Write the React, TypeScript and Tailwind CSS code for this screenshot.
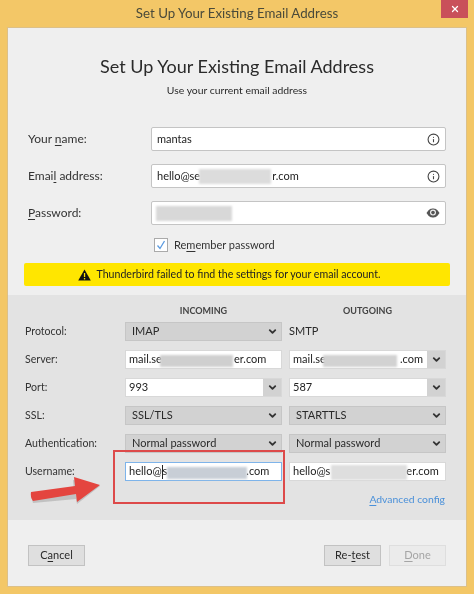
import React from "react";
import { ChevronDown, Info, X } from "lucide-react";

const Chevron = () => <ChevronDown size={11} strokeWidth={4} className="text-[#333]" />;

const U = ({ children }: { children: React.ReactNode }) => <span className="underline underline-offset-2 decoration-1">{children}</span>;

const Smudge = ({ className }: { className: string }) => <div className={`absolute blur-[1px] ${className}`} />;

function TopRow({ label, children, icon, mt }: { label: React.ReactNode; children: React.ReactNode; icon: React.ReactNode; mt: string }) {
  return (
    <div className={`flex items-center ${mt}`}>
      <div className="w-[143px] pl-[20px] text-[12px] text-[#333]">{label}</div>
      <div className="relative flex h-[24px] w-[295px] items-center justify-between rounded-[2px] border border-[#c4c4c4] bg-white pl-[5px] pr-[5px] text-[11px] text-[#222]">
        {children}
        {icon}
      </div>
    </div>
  );
}

function Select({ children, w = "w-[157px]" }: { children: React.ReactNode; w?: string }) {
  return (
    <div className={`flex h-[19px] ${w} items-center justify-between border border-[#c6c6c6] bg-[#d2d2d2] pl-[6px] pr-[3px] text-[11px] text-[#2a2a2a]`}>
      <span>{children}</span>
      <Chevron />
    </div>
  );
}

function Input({ children, w = "w-[157px]", drop, focus }: { children: React.ReactNode; w?: string; drop?: boolean; focus?: boolean }) {
  return (
    <div className={`relative flex h-[19px] ${w} items-stretch border ${focus ? "border-[#7eb4ea]" : "border-[#d8d8d8]"} bg-white text-[11px] text-[#222]`}>
      <div className="flex min-w-0 flex-1 items-center overflow-hidden whitespace-nowrap pl-[3px]">{children}</div>
      {drop && (
        <div className="flex w-[18px] shrink-0 items-center justify-center bg-[#d2d2d2]">
          <Chevron />
        </div>
      )}
    </div>
  );
}

function Row({ label, a, b, mt = "mt-[9px]" }: { label: string; a: React.ReactNode; b: React.ReactNode; mt?: string }) {
  return (
    <div className={`flex items-center ${mt}`}>
      <div className="w-[117px] pl-[17px] text-[10.6px] text-[#333]">{label}</div>
      <div className="flex items-center gap-[7px]">
        {a}
        {b}
      </div>
    </div>
  );
}

function Btn({ children, disabled }: { children: React.ReactNode; disabled?: boolean }) {
  return (
    <div className={`flex h-[21px] w-[57px] items-center justify-center border text-[11px] ${disabled ? "border-[#dedede] bg-[#ebebeb] text-[#a5a5a5]" : "border-[#c2c2c2] bg-[#dfdfdf] text-[#2a2a2a]"}`}>
      {children}
    </div>
  );
}

export default function App() {
  return (
    <div className="relative flex h-[594px] w-[474px] flex-col overflow-hidden bg-[#f3c767] font-['Lato','Noto_Sans',sans-serif] blur-[0.3px]">
      <div className="relative flex h-[27px] shrink-0 items-center justify-center text-[13.3px] text-[#4a4a3a]">
        Set Up Your Existing Email Address
        <div className="absolute right-[6px] top-0 flex h-[18px] w-[27px] items-center justify-center bg-[#c9505a] text-white">
          <X size={10} strokeWidth={3} />
        </div>
      </div>
      <div className="mx-[7px] flex h-[560px] flex-col border border-[#dcc088] bg-[#efefef]">
        <div className="flex h-[267px] shrink-0 flex-col">
          <div className="mt-[24px] text-center text-[18px] leading-[28px] text-[#2a2a2a]">Set Up Your Existing Email Address</div>
          <div className="mt-[2px] text-center text-[10.4px] leading-[16px] text-[#2a2a2a]">Use your current email address</div>
          <TopRow mt="mt-[29px]" label={<>Your <U>n</U>ame:</>} icon={<Info size={13} strokeWidth={2} className="text-[#444]" />}>
            <span>mantas</span>
          </TopRow>
          <TopRow
            mt="mt-[13px]"
            label={<>Emai<U>l</U> address:</>}
            icon={<Info size={13} strokeWidth={2} className="text-[#444]" />}
          >
            <span>hello@se<span className="inline-block w-[72px]" />r.com</span>
            <Smudge className="left-[47px] top-[4px] h-[15px] w-[72px] bg-[#dcdcdc]" />
          </TopRow>
          <TopRow
            mt="mt-[13px]"
            label={<><U>P</U>assword:</>}
            icon={
              <svg width="14" height="10" viewBox="0 0 14 10">
                <path d="M0.5 5C3 1 5 0.5 7 0.5S11 1 13.5 5C11 9 9 9.5 7 9.5S3 9 0.5 5Z" fill="#555" />
                <circle cx="7" cy="4.6" r="3" fill="#eee" />
                <circle cx="7" cy="4.6" r="1.8" fill="#555" />
              </svg>
            }
          >
            <span />
            <Smudge className="left-[4px] top-[4px] h-[15px] w-[76px] bg-[#d8d8d8]" />
          </TopRow>
          <div className="ml-[146px] mt-[13px] flex h-[14px] items-center gap-[6px] text-[11px] text-[#333]">
            <div className="flex h-[14px] w-[14px] items-center justify-center border border-[#aaa] bg-white">
              <svg width="10" height="10" viewBox="0 0 10 10" fill="none">
                <path d="M1.5 5.5L4 8.5L8.5 1" stroke="#5a9ae0" strokeWidth="1.3" />
              </svg>
            </div>
            <span>Re<U>m</U>ember password</span>
          </div>
          <div className="mx-[16px] mt-[11px] flex h-[23px] items-center justify-center gap-[6px] rounded-[2px] bg-[#ffe600] pr-[16px] text-[10.6px] text-[#222]">
            <svg width="13" height="12" viewBox="0 0 13 12">
              <path d="M6.5 0.5L12.8 11.5H0.2Z" fill="#111" />
              <rect x="5.9" y="4" width="1.3" height="4" fill="#ffe600" />
              <rect x="5.9" y="9" width="1.3" height="1.4" fill="#ffe600" />
            </svg>
            Thunderbird failed to find the settings for your email account.
          </div>
        </div>
        <div className="flex h-[225px] shrink-0 flex-col bg-[#e3e3e3]">
          <div className="mt-[9px] flex text-[9px] font-bold leading-[14px] text-[#444]">
            <div className="w-[117px]" />
            <div className="w-[157px] text-center">INCOMING</div>
            <div className="ml-[7px] w-[157px] text-center">OUTGOING</div>
          </div>
          <Row
            mt="mt-[4px]"
            label="Protocol:"
            a={<Select>IMAP</Select>}
            b={<div className="w-[157px] text-[11px] text-[#2a2a2a]">SMTP</div>}
          />
          <Row
            label="Server:"
            a={
              <Input>
                mail.se<span className="inline-block w-[72px]" />er.com
                <Smudge className="left-[34px] top-[4px] h-[12px] w-[73px] bg-[#cfcfcf]" />
              </Input>
            }
            b={
              <Input drop>
                mail.se<span className="inline-block w-[74px] shrink-0" />.com
                <Smudge className="left-[33px] top-[4px] h-[12px] w-[74px] bg-[#d2d2d2]" />
              </Input>
            }
          />
          <Row label="Port:" a={<Input drop>993</Input>} b={<Input drop>587</Input>} />
          <Row label="SSL:" a={<Select>SSL/TLS</Select>} b={<Select>STARTTLS</Select>} />
          <Row label="Authentication:" a={<Select>Normal password</Select>} b={<Select>Normal password</Select>} />
          <Row
            label="Username:"
            a={
              <Input focus>
                hello@
                <span className="h-[14px] w-px bg-[#222]" />
                s<span className="inline-block w-[79px]" />.com
                <Smudge className="left-[41px] top-[4px] h-[12px] w-[80px] bg-[#c8ced6]" />
              </Input>
            }
            b={
              <Input>
                hello@s<span className="inline-block w-[76px]" />er.com
                <Smudge className="left-[41px] top-[2px] h-[15px] w-[76px] bg-[#dedede]" />
              </Input>
            }
          />
          <div className="mr-[21px] mt-[10px] text-right text-[10.4px] leading-[16px] text-[#4a90d9]">
            <U>A</U>dvanced config
          </div>
        </div>
        <div className="flex flex-1 items-start justify-between pl-[20px] pr-[20px] pt-[25px]">
          <Btn>C<U>a</U>ncel</Btn>
          <div className="flex gap-[8px]">
            <Btn>Re-<U>t</U>est</Btn>
            <Btn disabled><U>D</U>one</Btn>
          </div>
        </div>
      </div>
      <div className="absolute left-[113px] top-[450px] h-[54px] w-[172px] border-[2px] border-[#dd4a4a]" />
      <svg className="absolute left-[24px] top-[470px]" width="84" height="40" viewBox="0 0 84 40">
        <path d="M7 24L50 19L49 8L76 14L53 32L52 27L9 31Z" fill="#aaa" opacity="0.6" transform="translate(0 2)" />
        <path d="M7 22L51 16L50 7L76 15L53 32L52 24L9 31Q6 27 7 22Z" fill="#e4453f" />
      </svg>
    </div>
  );
}
